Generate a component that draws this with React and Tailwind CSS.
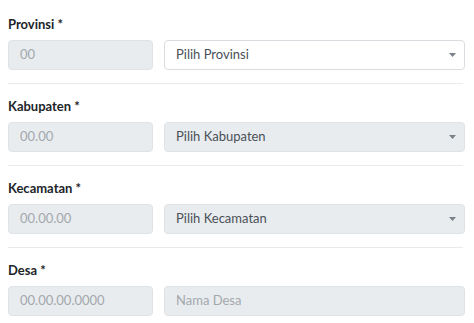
import React from 'react';

const fields = [
  { label: 'Provinsi', code: '00', name: 'Pilih Provinsi', kind: 'select', enabled: true },
  { label: 'Kabupaten', code: '00.00', name: 'Pilih Kabupaten', kind: 'select', enabled: false },
  { label: 'Kecamatan', code: '00.00.00', name: 'Pilih Kecamatan', kind: 'select', enabled: false },
  { label: 'Desa', code: '00.00.00.0000', name: 'Nama Desa', kind: 'input', enabled: false },
];

const Caret = () => (
  <svg width="7" height="4" viewBox="0 0 7 4" className="shrink-0">
    <path d="M0 0 L7 0 L3.5 4 Z" fill="#7b8188" />
  </svg>
);

const App = () => {
  return (
    <div className="w-[474px] h-[323px] bg-white overflow-hidden pl-2 pr-[9px] pt-[14px] font-['Lato','Noto_Sans',sans-serif]">
      {fields.map((field, index) => (
        <div key={field.label}>
          <label className="block h-5 leading-5 text-[13px] font-bold text-[#212529]">
            {field.label} *
          </label>
          <div className="grid grid-cols-[145px_1fr] gap-[11px] mt-[6px]">
            <div className="h-[30px] rounded-[4px] border border-[#dfe2e6] bg-[#e9ecef] px-[11px] flex items-center text-[13px] text-[#a3a8ad]">
              {field.code}
            </div>
            {field.kind === 'select' ? (
              <div
                className={`h-[30px] rounded-[4px] border pl-[11px] pr-[8px] flex items-center justify-between text-[13px] text-[#495057] ${
                  field.enabled ? 'bg-white border-[#d9dde1]' : 'bg-[#e9ecef] border-[#dfe2e6]'
                }`}
              >
                <span>{field.name}</span>
                <Caret />
              </div>
            ) : (
              <div className="h-[30px] rounded-[4px] border border-[#dfe2e6] bg-[#e9ecef] px-[11px] flex items-center text-[13px] text-[#a3a8ad]">
                {field.name}
              </div>
            )}
          </div>
          {index < fields.length - 1 && (
            <div className="mt-[13px] mb-3 h-px bg-[#e8eaed] mr-[2px]" />
          )}
        </div>
      ))}
    </div>
  );
};

export default App;
